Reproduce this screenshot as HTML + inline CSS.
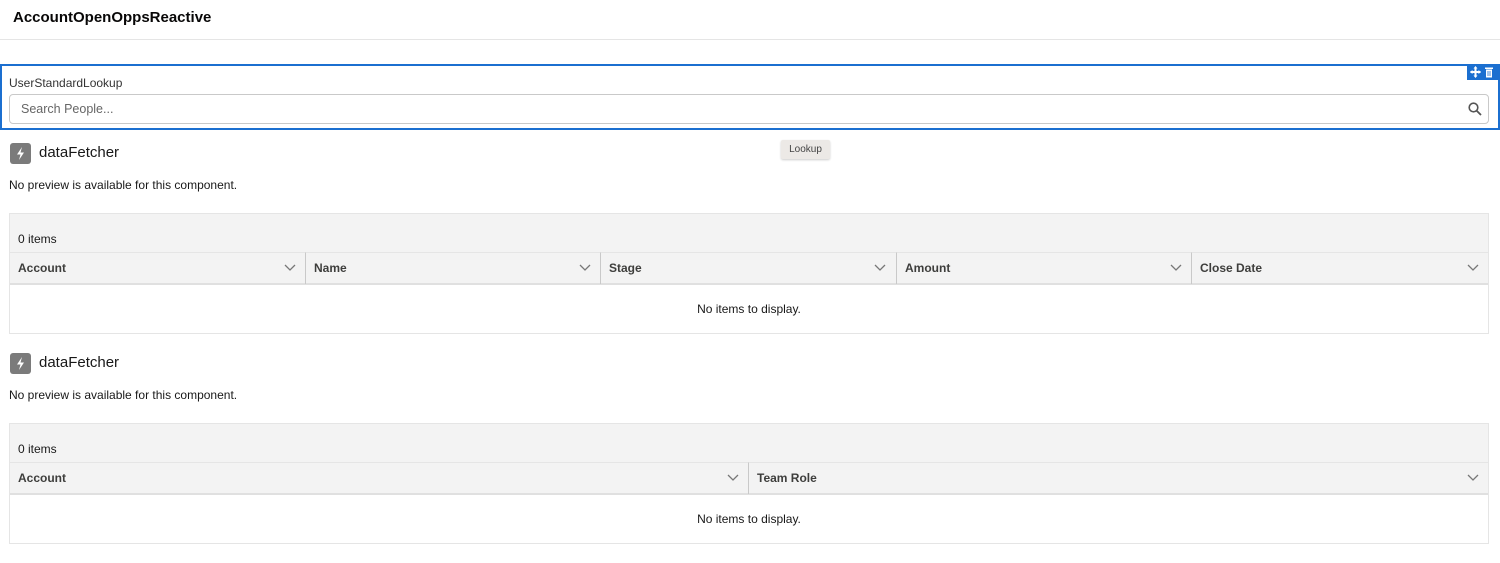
<!DOCTYPE html>
<html><head><meta charset="utf-8"><style>
*{box-sizing:border-box;margin:0;padding:0}
body{width:1500px;height:563px;background:#fff;font-family:"Liberation Sans",Arial,sans-serif;color:#181818;position:relative;overflow:hidden}
.a{position:absolute}
.t{font-size:12px;white-space:nowrap}
.tbl{position:absolute;left:9px;width:1480px;height:121px;border:1px solid #e5e5e5;background:#fff}
.tbl .hd{position:absolute;left:0;top:0;width:100%;height:71px;background:#f3f3f3;border-bottom:2px solid #e0e0e0}
.col{position:absolute;top:38px;height:32px;border-top:1px solid #e5e5e5;font-weight:bold;font-size:12px;line-height:31px;padding-left:8px;color:#3e3e3c}
.col svg{position:absolute;right:10px;top:11px}
.col.b{border-left:1px solid #c9c9c9}
.ic{position:absolute;left:10px;width:21px;height:21px;background:#7b7b7b;border-radius:3px}
</style></head><body>
<div class="a" style="left:13px;top:9px;font-size:15px;font-weight:bold;color:#080707">AccountOpenOppsReactive</div>
<div class="a" style="left:0;top:39px;width:1500px;height:1px;background:#e5e5e5"></div>
<div class="a" style="left:0;top:64px;width:1500px;height:66px;border:2px solid #1b6fd0"></div>
<div class="a" style="left:1467px;top:64px;width:33px;height:16px;background:#1b6fd0"></div>
<svg class="a" style="left:1470px;top:66px" width="28" height="12" viewBox="0 0 28 12"><path d="M5.5 1v10M0.5 6h10" stroke="#fff" stroke-width="2"/><path d="M5.5 0l2 2.5h-4zM5.5 12l2-2.5h-4zM0 6l2.5-2v4zM11 6l-2.5-2v4z" fill="#fff"/><rect x="15" y="1.5" width="8" height="1.5" fill="#fff"/><rect x="16" y="3.5" width="6" height="8" fill="#fff"/><path d="M18 5v5M20 5v5" stroke="#1b6fd0" stroke-width=".8"/></svg>
<div class="a t" style="left:9px;top:76px;font-size:12px;color:#333">UserStandardLookup</div>
<div class="a" style="left:9px;top:94px;width:1480px;height:30px;border:1px solid #c9c9c9;border-radius:4px"></div>
<div class="a t" style="left:21px;top:102px;color:#666;font-size:12.5px">Search People...</div>
<svg class="a" style="left:1468px;top:102px" width="14" height="14" viewBox="0 0 14 14"><circle cx="5.5" cy="5.5" r="4.3" fill="none" stroke="#555" stroke-width="1.6"/><path d="M8.7 8.7L13 13" stroke="#555" stroke-width="1.8"/></svg>
<div class="a" style="left:781px;top:140px;width:49px;height:19px;background:#ece9e6;border-radius:2px;box-shadow:0 1px 2px rgba(0,0,0,.2);font-size:10px;line-height:19px;text-align:center;color:#444">Lookup</div>

<div class="ic" style="top:143px"><svg width="21" height="21" viewBox="0 0 21 21"><path d="M12 4L7 11.5h3.5L9 17l5-7.5h-3.5z" fill="#fff"/></svg></div>
<div class="a" style="left:39px;top:144px;font-size:15px">dataFetcher</div>
<div class="a t" style="left:9px;top:178px;font-size:12px">No preview is available for this component.</div>
<div class="tbl" style="top:213px"><div class="hd"></div>
<div class="a t" style="left:8px;top:18px">0 items</div>
<div class="col" style="left:0;width:296px">Account<svg width="12" height="8"><path d="M1 1l5 5 5-5" fill="none" stroke="#777" stroke-width="1.3"/></svg></div>
<div class="col b" style="left:295px;width:296px">Name<svg width="12" height="8"><path d="M1 1l5 5 5-5" fill="none" stroke="#777" stroke-width="1.3"/></svg></div>
<div class="col b" style="left:590px;width:296px">Stage<svg width="12" height="8"><path d="M1 1l5 5 5-5" fill="none" stroke="#777" stroke-width="1.3"/></svg></div>
<div class="col b" style="left:886px;width:296px">Amount<svg width="12" height="8"><path d="M1 1l5 5 5-5" fill="none" stroke="#777" stroke-width="1.3"/></svg></div>
<div class="col b" style="left:1181px;width:298px">Close Date<svg width="12" height="8"><path d="M1 1l5 5 5-5" fill="none" stroke="#777" stroke-width="1.3"/></svg></div>
<div class="a t" style="left:0;width:100%;text-align:center;top:88px">No items to display.</div>
</div>

<div class="ic" style="top:353px"><svg width="21" height="21" viewBox="0 0 21 21"><path d="M12 4L7 11.5h3.5L9 17l5-7.5h-3.5z" fill="#fff"/></svg></div>
<div class="a" style="left:39px;top:354px;font-size:15px">dataFetcher</div>
<div class="a t" style="left:9px;top:388px;font-size:12px">No preview is available for this component.</div>
<div class="tbl" style="top:423px"><div class="hd"></div>
<div class="a t" style="left:8px;top:18px">0 items</div>
<div class="col" style="left:0;width:739px">Account<svg width="12" height="8"><path d="M1 1l5 5 5-5" fill="none" stroke="#777" stroke-width="1.3"/></svg></div>
<div class="col b" style="left:738px;width:741px">Team Role<svg width="12" height="8"><path d="M1 1l5 5 5-5" fill="none" stroke="#777" stroke-width="1.3"/></svg></div>
<div class="a t" style="left:0;width:100%;text-align:center;top:88px">No items to display.</div>
</div>
</body></html>
